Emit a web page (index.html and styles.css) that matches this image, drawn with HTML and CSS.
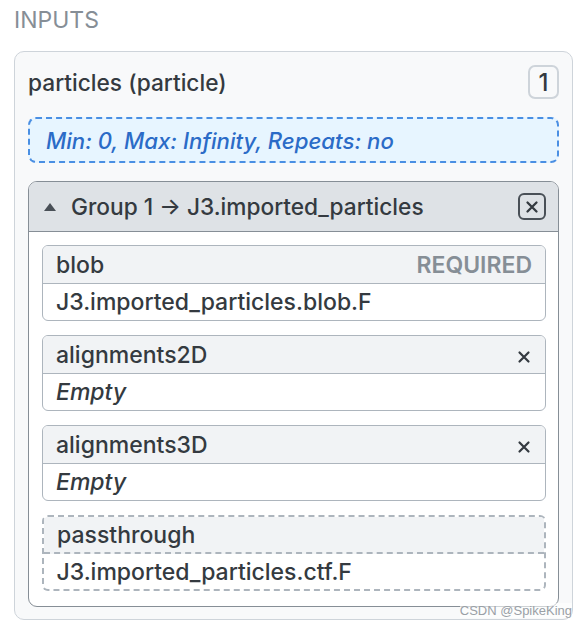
FILE: index.html
```html
<!DOCTYPE html>
<html>
<head>
<meta charset="utf-8">
<link rel="stylesheet" href="styles.css">
</head>
<body>
<div class="page">
  <div class="section-title">INPUTS</div>
  <div class="card">
    <div class="title-row">
      <div class="title">particles (particle)</div>
      <div class="badge">1</div>
    </div>
    <div class="info">Min: 0, Max: Infinity, Repeats: no</div>
    <div class="group">
      <div class="group-head">
        <div class="group-label">
          <svg class="tri" width="14" height="10" viewBox="0 0 14 10"><path d="M7 1 L13 9 L1 9 Z" fill="#495057"/></svg>
          <span>Group 1 → J3.imported_particles</span>
        </div>
        <div class="close-btn">
          <svg width="14" height="14" viewBox="0 0 14 14"><path d="M2.5 2.5 L11.5 11.5 M11.5 2.5 L2.5 11.5" stroke="#343a40" stroke-width="2.3" stroke-linecap="round"/></svg>
        </div>
      </div>
      <div class="group-body">
        <div class="field">
          <div class="field-head"><span>blob</span><span class="req">REQUIRED</span></div>
          <div class="field-body">J3.imported_particles.blob.F</div>
        </div>
        <div class="field">
          <div class="field-head"><span>alignments2D</span>
            <svg class="x" width="14" height="14" viewBox="0 0 14 14"><path d="M2.5 2.5 L11.5 11.5 M11.5 2.5 L2.5 11.5" stroke="#343a40" stroke-width="2.2" stroke-linecap="round"/></svg>
          </div>
          <div class="field-body empty">Empty</div>
        </div>
        <div class="field">
          <div class="field-head"><span>alignments3D</span>
            <svg class="x" width="14" height="14" viewBox="0 0 14 14"><path d="M2.5 2.5 L11.5 11.5 M11.5 2.5 L2.5 11.5" stroke="#343a40" stroke-width="2.2" stroke-linecap="round"/></svg>
          </div>
          <div class="field-body empty">Empty</div>
        </div>
        <div class="field dashed">
          <div class="field-head"><span>passthrough</span></div>
          <div class="field-body">J3.imported_particles.ctf.F</div>
        </div>
      </div>
    </div>
  </div>
  <div class="watermark">CSDN @SpikeKing</div>
</div>
</body>
</html>
```
FILE: styles.css
```css
* { box-sizing: border-box; }
html, body { margin: 0; padding: 0; background: #ffffff; }
body { font-family: Inter, "Noto Sans", sans-serif; color: #343a40; font-weight: 500; }
.page { position: relative; width: 586px; height: 628px; padding: 6px 13px 0 14px; }
.section-title { font-size: 23px; line-height: 28px; color: #868e96; font-weight: 400; height: 45px; }
.card { width: 559px; border: 1.5px solid #ced4da; border-radius: 10px; background: #f8f9fa; padding: 13px 13px 12px 13px; }
.title-row { display: flex; justify-content: space-between; align-items: center; height: 34px; }
.title { font-size: 22.7px; color: #343a40; }
.badge { width: 31px; height: 34px; border: 2px solid #ced4da; border-radius: 7px; display: flex; align-items: center; justify-content: center; font-size: 24px; color: #343a40; background: #f8f9fa; }
.info { margin-top: 18px; height: 46px; border: 2px dashed #4a8fe3; border-radius: 8px; background: #e7f5ff; color: #2b6bc7; font-style: italic; font-size: 22.2px; display: flex; align-items: center; padding: 0 16px; }
.group { margin-top: 18px; border: 1.5px solid #868e96; border-radius: 9px; overflow: hidden; background: #ffffff; }
.group-head { height: 50px; background: #dee2e6; border-bottom: 1.5px solid #868e96; display: flex; align-items: center; justify-content: space-between; padding: 0 12px 0 14px; }
.group-label { display: flex; align-items: center; gap: 14px; font-size: 22.7px; color: #343a40; }
.tri { display: block; }
.close-btn { width: 28px; height: 27px; border: 2px solid #495057; border-radius: 6px; display: flex; align-items: center; justify-content: center; }
.close-btn svg { display: block; }
.group-body { padding: 13px 12px 15px 13px; display: flex; flex-direction: column; gap: 14px; }
.field { border: 1.5px solid #adb5bd; border-radius: 6px; overflow: hidden; background: #ffffff; }
.field.dashed { border: 2px dashed #adb5bd; }
.field-head { height: 38px; background: #f1f3f5; border-bottom: 1.5px solid #adb5bd; display: flex; align-items: center; justify-content: space-between; padding: 0 13px 0 13px; font-size: 23px; color: #343a40; }
.field.dashed .field-head { border-bottom: 2px dashed #adb5bd; height: 37px; }
.field.dashed .field-body { height: 35px; padding-left: 12.5px; }
.req { color: #868e96; font-weight: 600; }
.x { display: block; margin-right: 1px; margin-top: 4px; }
.field-body { height: 36px; display: flex; align-items: center; padding: 0 13px; font-size: 23px; color: #343a40; }
.field-body.empty { font-style: italic; }
.watermark { position: absolute; right: 14px; top: 603px; font-size: 13px; font-weight: 400; color: #9aa0a6; font-family: "Liberation Sans", Arial, sans-serif; background: rgba(255,255,255,0.6); }
```
